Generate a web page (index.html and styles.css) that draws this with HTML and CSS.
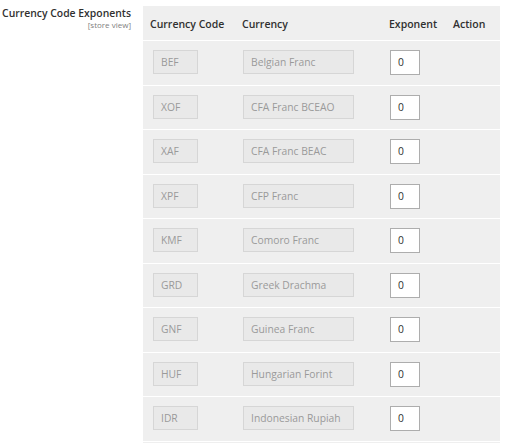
FILE: index.html
```html
<!DOCTYPE html>
<html>
<head>
<meta charset="utf-8">
<link rel="stylesheet" href="styles.css">
</head>
<body>
<div class="field">
  <div class="label">
    <div class="label-title">Currency Code Exponents</div>
    <div class="label-scope">[store view]</div>
  </div>
  <div class="grid">
    <div class="row head">
      <div class="c c1">Currency Code</div>
      <div class="c c2">Currency</div>
      <div class="c c3">Exponent</div>
      <div class="c c4">Action</div>
    </div>
    <div class="row"><div class="c c1"><span class="box code">BEF</span></div><div class="c c2"><span class="box name">Belgian Franc</span></div><div class="c c3"><span class="exp">0</span></div><div class="c c4"></div></div>
    <div class="row"><div class="c c1"><span class="box code">XOF</span></div><div class="c c2"><span class="box name">CFA Franc BCEAO</span></div><div class="c c3"><span class="exp">0</span></div><div class="c c4"></div></div>
    <div class="row"><div class="c c1"><span class="box code">XAF</span></div><div class="c c2"><span class="box name">CFA Franc BEAC</span></div><div class="c c3"><span class="exp">0</span></div><div class="c c4"></div></div>
    <div class="row"><div class="c c1"><span class="box code">XPF</span></div><div class="c c2"><span class="box name">CFP Franc</span></div><div class="c c3"><span class="exp">0</span></div><div class="c c4"></div></div>
    <div class="row"><div class="c c1"><span class="box code">KMF</span></div><div class="c c2"><span class="box name">Comoro Franc</span></div><div class="c c3"><span class="exp">0</span></div><div class="c c4"></div></div>
    <div class="row"><div class="c c1"><span class="box code">GRD</span></div><div class="c c2"><span class="box name">Greek Drachma</span></div><div class="c c3"><span class="exp">0</span></div><div class="c c4"></div></div>
    <div class="row"><div class="c c1"><span class="box code">GNF</span></div><div class="c c2"><span class="box name">Guinea Franc</span></div><div class="c c3"><span class="exp">0</span></div><div class="c c4"></div></div>
    <div class="row"><div class="c c1"><span class="box code">HUF</span></div><div class="c c2"><span class="box name">Hungarian Forint</span></div><div class="c c3"><span class="exp">0</span></div><div class="c c4"></div></div>
    <div class="row"><div class="c c1"><span class="box code">IDR</span></div><div class="c c2"><span class="box name">Indonesian Rupiah</span></div><div class="c c3"><span class="exp">0</span></div><div class="c c4"></div></div>
    <div class="row"><div class="c c1"></div><div class="c c2"></div><div class="c c3"></div><div class="c c4"></div></div>
  </div>
</div>
</body>
</html>
```
FILE: styles.css
```css
html, body {
  margin: 0;
  padding: 0;
  background: #fff;
  font-family: "Open Sans", "Liberation Sans", sans-serif;
  color: #303030;
  overflow: hidden;
}
.field {
  display: flex;
  align-items: flex-start;
  height: 443px;
  overflow: hidden;
}
.label {
  width: 131px;
  text-align: right;
  padding-top: 7px;
  flex: none;
}
.label-title {
  font-size: 10.4px;
  font-weight: 600;
  line-height: 13px;
  white-space: nowrap;
}
.label-scope {
  font-size: 8px;
  line-height: 10px;
  color: #808080;
}
.grid {
  margin-left: 12px;
  margin-top: 6px;
  width: 357px;
  background: #efefef;
}
.row {
  display: grid;
  grid-template-columns: 92px 147px 64px 54px;
  height: 44.5px;
  box-sizing: border-box;
  border-bottom: 1px solid #fff;
}
.row.head {
  height: 35px;
  align-items: center;
}
.head .c {
  padding-left: 7px;
  font-size: 10.5px;
  font-weight: 600;
  white-space: nowrap;
  padding-top: 2px;
}
.c {
  padding-top: 9px;
  box-sizing: border-box;
}
.c1 { padding-left: 10px; }
.c2 { padding-left: 8px; }
.c3 { padding-left: 8px; }
.box, .exp {
  display: block;
  box-sizing: border-box;
  height: 24px;
  line-height: 22px;
  font-size: 10.3px;
  white-space: nowrap;
}
.box {
  background: #e9e9e9;
  border: 1px solid #d6d6d6;
  color: #9a9a9a;
}
.code {
  width: 45px;
  padding-left: 7px;
}
.name {
  width: 111px;
  padding-left: 7px;
}
.exp {
  width: 30px;
  padding-left: 7px;
  background: #fff;
  border: 1px solid #adadad;
  color: #303030;
  height: 25px;
  line-height: 23px;
}
```
